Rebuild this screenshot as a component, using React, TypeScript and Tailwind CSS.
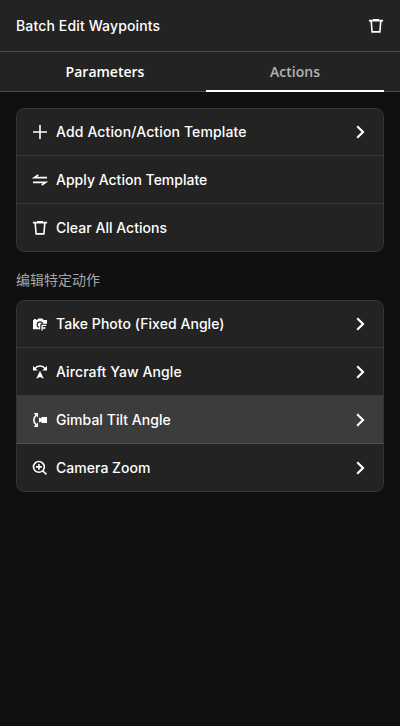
import type { ReactNode } from "react";

const TrashIcon = () => (
  <svg width="16" height="16" viewBox="0 0 16 16" fill="none" stroke="currentColor" strokeWidth="1.6">
    <path d="M.9 2.6h14.2M5 1.9h6M3.2 3l.9 10.9h7.8L12.8 3" />
  </svg>
);

const PlusIcon = () => (
  <svg width="16" height="16" viewBox="0 0 16 16" fill="none" stroke="currentColor" strokeWidth="1.6">
    <path d="M1 8h14M8 1v14" />
  </svg>
);

const SwapIcon = () => (
  <svg width="16" height="16" viewBox="0 0 16 16" fill="none" stroke="currentColor" strokeWidth="1.6">
    <path d="M15 5.6H2.4L6.3 2.8M1 10.4h12.6L9.7 13.2" />
  </svg>
);

const PhotoIcon = () => (
  <svg width="16" height="16" viewBox="0 0 16 16">
    <path fill="currentColor" d="M1 4h1V2.9h2V4h1l1.2-1.6h4.2L11.6 4H15v3.8H8.6v5.4H1z" />
    <path fill="none" stroke="#232323" strokeWidth="1.2" d="M7 11.3A2.8 2.8 0 1 1 10.7 8.2" />
    <path fill="#232323" d="M8.4 8.2H15V15H8.4z" />
    <path fill="none" stroke="currentColor" strokeWidth="1.3" d="M10.1 14.6V9.4h4.2M10.1 12h3.4" />
  </svg>
);

const YawIcon = () => (
  <svg width="16" height="16" viewBox="0 0 16 16">
    <path fill="none" stroke="currentColor" strokeWidth="1.6" d="M2.9 4.6C5.4 1.1 10.6 1.1 13.1 4.6" />
    <path fill="currentColor" d="M1 1.8v4.8h4.6zM15 1.8v4.8h-4.6zM8 6.8l3.8 8-3.8-1.9-3.8 1.9z" />
  </svg>
);

const TiltIcon = () => (
  <svg width="16" height="16" viewBox="0 0 16 16">
    <path fill="none" stroke="currentColor" strokeWidth="1.6" d="M4 3.3C1.1 5.8 1.1 10.2 4 12.7" />
    <path fill="currentColor" d="M1.6 1H6v4.4zM1.6 15H6v-4.4zM9.4 5H15v6H9.4V9.6L7 10.6V5.4l2.4 1z" />
  </svg>
);

const ZoomIcon = () => (
  <svg width="16" height="16" viewBox="0 0 16 16" fill="none" stroke="currentColor" strokeWidth="1.6">
    <circle cx="6.9" cy="6.9" r="5.4" />
    <path d="M10.7 10.7L14.4 14.4M4 6.9h5.8M6.9 4v5.8" />
  </svg>
);

const ChevronIcon = () => (
  <svg width="16" height="16" viewBox="0 0 16 16" fill="none" stroke="currentColor" strokeWidth="2.2">
    <path d="M5.2 2.2L11 8l-5.8 5.8" />
  </svg>
);

type Item = {
  label: string;
  icon: ReactNode;
  spacing: string;
  arrow?: boolean;
  active?: boolean;
};

const generalActions: Item[] = [
  { label: "Add Action/Action Template", icon: <PlusIcon />, spacing: "tracking-[0.13px]", arrow: true },
  { label: "Apply Action Template", icon: <SwapIcon />, spacing: "tracking-[0.01px]" },
  { label: "Clear All Actions", icon: <TrashIcon />, spacing: "tracking-[0.03px]" },
];

const specificActions: Item[] = [
  { label: "Take Photo (Fixed Angle)", icon: <PhotoIcon />, spacing: "tracking-[0.06px]", arrow: true },
  { label: "Aircraft Yaw Angle", icon: <YawIcon />, spacing: "tracking-[0.1px]", arrow: true },
  { label: "Gimbal Tilt Angle", icon: <TiltIcon />, spacing: "tracking-[0.04px]", arrow: true, active: true },
  { label: "Camera Zoom", icon: <ZoomIcon />, spacing: "tracking-[0.03px]", arrow: true },
];

const ActionList = ({ items }: { items: Item[] }) => (
  <div className="overflow-hidden rounded-lg border border-[#343434] bg-[#232323]">
    {items.map((item) => (
      <button
        key={item.label}
        className={`flex h-12 w-full items-center border-b px-[15px] text-left first:h-[47px] last:h-[47px] last:border-b-0 ${
          item.active ? "border-[#4f4f4f] bg-[#3c3c3c]" : "border-[#363636]"
        }`}
      >
        <span className="mr-2 shrink-0">{item.icon}</span>
        <span className={`flex-1 whitespace-nowrap ${item.spacing}`}>{item.label}</span>
        {item.arrow && <ChevronIcon />}
      </button>
    ))}
  </div>
);

const App = () => {
  return (
    <div className="min-h-screen bg-[#101010] font-['Inter','Noto_Sans_CJK_SC',sans-serif] text-[14px] font-medium leading-5 text-white">
      <header className="flex h-[52px] items-center justify-between border-b border-[#4f4f4f] bg-[#232323] px-4">
        <h1 className="pt-px tracking-[0.14px]">Batch Edit Waypoints</h1>
        <button className="text-white">
          <TrashIcon />
        </button>
      </header>

      <nav className="flex h-10 gap-3 border-b border-[#4f4f4f] bg-[#232323] px-4 font-['Open_Sans',sans-serif] font-semibold">
        <button className="h-10 flex-1 border-b-2 border-transparent pt-0.5">Parameters</button>
        <button className="h-10 flex-1 border-b-2 border-white pt-0.5 text-[#b4b4b4]">Actions</button>
      </nav>

      <main className="px-4 pt-4">
        <ActionList items={generalActions} />
        <p className="mb-[11px] mt-[17px] font-['Noto_Sans_CJK_SC',sans-serif] font-normal text-[#a5a5a5]">编辑特定动作</p>
        <ActionList items={specificActions} />
      </main>
    </div>
  );
};

export default App;
